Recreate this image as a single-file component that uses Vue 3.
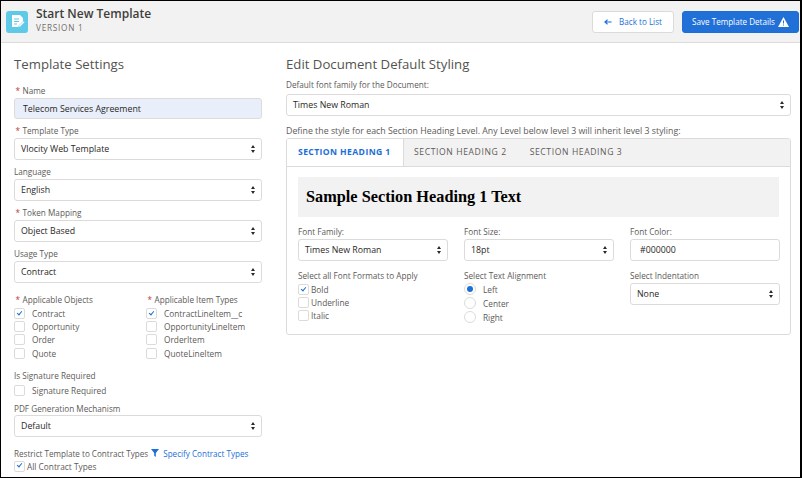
<script setup>
const objects = [
  { label: "Contract", checked: true },
  { label: "Opportunity" },
  { label: "Order" },
  { label: "Quote" },
];
const itemTypes = [
  { label: "ContractLineItem__c", checked: true },
  { label: "OpportunityLineItem" },
  { label: "OrderItem" },
  { label: "QuoteLineItem" },
];
const topSelects = [
  { label: "Template Type", value: "Vlocity Web Template", required: true },
  { label: "Language", value: "English" },
  { label: "Token Mapping", value: "Object Based", required: true },
  { label: "Usage Type", value: "Contract" },
];
const tabs = ["SECTION HEADING 1", "SECTION HEADING 2", "SECTION HEADING 3"];
const formats = [
  { label: "Bold", checked: true },
  { label: "Underline" },
  { label: "Italic" },
];
const aligns = [
  { label: "Left", on: true },
  { label: "Center" },
  { label: "Right" },
];
</script>

<template>
  <div class="page">
    <header class="top">
      <div class="logo">
        <svg width="17" height="17" viewBox="0 0 17 17">
          <path d="M3 2h8l3 3v4l-4 5H3z" fill="#fff" />
          <path d="M5 6h5M5 8.5h5M5 11h3" stroke="#5fc9e8" stroke-width="1.2" />
          <path d="M10 12.5l4.5-4.5 1.2 1.2-4.5 4.5-1.7.5z" fill="#fff" stroke="#5fc9e8" stroke-width=".5" />
        </svg>
      </div>
      <div class="titles">
        <div class="title">Start New Template</div>
        <div class="version">VERSION 1</div>
      </div>
      <button class="btn back">
        <svg width="8" height="8" viewBox="0 0 9 9"><path d="M8.5 4.5H2M4 2L1 4.5 4 7" fill="none" stroke="#1b6fd8" stroke-width="1.2" /></svg>
        Back to List
      </button>
      <button class="btn save">
        Save Template Details
        <svg width="11" height="10" viewBox="0 0 11 10"><path d="M5.5 0L11 10H0z" fill="#fff" /><path d="M5.5 3.5v3M5.5 7.5v1" stroke="#2170d8" stroke-width="1" /></svg>
      </button>
    </header>

    <main class="body">
      <section class="left">
        <h2>Template Settings</h2>
        <div class="field first">
          <label><i>*</i>Name</label>
          <div class="box filled">Telecom Services Agreement</div>
        </div>
        <div v-for="s in topSelects" :key="s.label" class="field">
          <label><i v-if="s.required">*</i>{{ s.label }}</label>
          <div class="box sel">
            {{ s.value }}
            <span class="arrows"></span>
          </div>
        </div>

        <div class="applicable">
          <div class="col">
            <label><i>*</i>Applicable Objects</label>
            <div v-for="o in objects" :key="o.label" class="check wide">
              <span class="cb" :class="{ on: o.checked }"></span>{{ o.label }}
            </div>
          </div>
          <div class="col">
            <label><i>*</i>Applicable Item Types</label>
            <div v-for="o in itemTypes" :key="o.label" class="check wide">
              <span class="cb" :class="{ on: o.checked }"></span>{{ o.label }}
            </div>
          </div>
        </div>

        <div class="sig">
          <label>Is Signature Required</label>
          <div class="check wide"><span class="cb"></span>Signature Required</div>
        </div>
        <div class="pdf">
          <label>PDF Generation Mechanism</label>
          <div class="box sel">Default<span class="arrows"></span></div>
        </div>
        <div class="restrict">
          <span>Restrict Template to Contract Types</span>
          <svg width="8" height="8" viewBox="0 0 10 10"><path d="M0 0h10L6 5v5L4 8.5V5z" fill="#1b6fd8" /></svg>
          <a>Specify Contract Types</a>
        </div>
        <div class="check"><span class="cb on"></span>All Contract Types</div>
      </section>

      <section class="right">
        <h2>Edit Document Default Styling</h2>
        <div class="family">
          <label>Default font family for the Document:</label>
          <div class="box sel">Times New Roman<span class="arrows"></span></div>
        </div>
        <p class="hint">Define the style for each Section Heading Level. Any Level below level 3 will inherit level 3 styling:</p>

        <div class="card">
          <div class="tabs">
            <div v-for="(t, i) in tabs" :key="t" class="tab" :class="{ active: i === 0 }">{{ t }}</div>
          </div>
          <div class="pane">
            <div class="sample">Sample Section Heading 1 Text</div>
            <div class="grid">
              <div>
                <label>Font Family:</label>
                <div class="box sel">Times New Roman<span class="arrows"></span></div>
              </div>
              <div>
                <label>Font Size:</label>
                <div class="box sel">18pt<span class="arrows"></span></div>
              </div>
              <div>
                <label>Font Color:</label>
                <div class="box color">#000000</div>
              </div>
              <div>
                <label>Select all Font Formats to Apply</label>
                <div v-for="f in formats" :key="f.label" class="check">
                  <span class="cb" :class="{ on: f.checked }"></span>{{ f.label }}
                </div>
              </div>
              <div>
                <label>Select Text Alignment</label>
                <div class="radios">
                  <div v-for="a in aligns" :key="a.label" class="radio">
                    <span class="rd" :class="{ on: a.on }"></span>{{ a.label }}
                  </div>
                </div>
              </div>
              <div>
                <label>Select Indentation</label>
                <div class="box sel">None<span class="arrows"></span></div>
              </div>
            </div>
          </div>
        </div>
      </section>
    </main>
  </div>
</template>

<style>
html, body { margin: 0; background: #fff; }
</style>

<style scoped>
.page {
  width: 802px;
  height: 478px;
  box-sizing: border-box;
  border: 1px solid #000;
  border-right-width: 2px;
  overflow: hidden;
  font-family: "Open Sans", "Liberation Sans", sans-serif;
  font-size: 8.8px;
  color: #3e3e3c;
  background: #fff;
}
.top {
  height: 41px;
  background: #f3f2f2;
  border-bottom: 1px solid #dddbda;
  display: flex;
  align-items: center;
  padding: 0 1px 0 5px;
}
.logo {
  width: 22px;
  height: 22px;
  border-radius: 3px;
  background: #5fc9e8;
  display: flex;
  align-items: center;
  justify-content: center;
  margin-right: 8px;
}
.titles { flex: 1; margin-top: -4px; }
.title { font-size: 12px; font-weight: 600; line-height: 16px; color: #3e3e3c; }
.version { font-size: 8.2px; line-height: 11px; letter-spacing: .75px; color: #706e6b; }
.btn {
  height: 22px;
  border-radius: 3px;
  font: inherit;
  font-size: 8.1px;
  display: flex;
  align-items: center;
  justify-content: center;
  gap: 3px;
  padding: 0;
}
.back {
  width: 82px;
  background: #fff;
  color: #1b6fd8;
  border: 1px solid #dddbda;
  margin-right: 8px;
  gap: 7px;
}
.save {
  width: 117px;
  background: #2170d8;
  color: #fff;
  border: 1px solid #1b6fd8;
}
.body { display: flex; }
.left { width: 248px; margin-left: 13px; }
.right { width: 505px; margin-left: 24px; }
h2 {
  margin: 0;
  padding-top: 11px;
  font-size: 13.2px;
  line-height: 20px;
  font-weight: 400;
  color: #54534f;
}
label {
  display: block;
  font-size: 8.2px;
  line-height: 12px;
  color: #5c5a58;
}
label i {
  font-style: normal;
  color: #c23934;
  margin: 0 2.5px 0 1.5px;
}
.field { margin-top: 6px; }
.field label { margin-bottom: 1px; }
.field.first { margin-top: 11px; }
.field.first .box { height: 21px; line-height: 20px; }
.box {
  position: relative;
  height: 22px;
  line-height: 20px;
  box-sizing: border-box;
  background: #fff;
  border: 1px solid #dddbda;
  border-radius: 3px;
  padding: 0 6px;
  color: #2b2826;
  white-space: nowrap;
}
.box.filled { background: #e8effa; padding-left: 8px; }
.box.color { padding-left: 9px; }
.arrows {
  position: absolute;
  right: 6px;
  top: 6px;
  width: 0;
  height: 0;
  border-left: 2.5px solid transparent;
  border-right: 2.5px solid transparent;
  border-bottom: 3.5px solid #2b2826;
}
.arrows::after {
  content: "";
  position: absolute;
  left: -2.5px;
  top: 5px;
  width: 0;
  height: 0;
  border-left: 2.5px solid transparent;
  border-right: 2.5px solid transparent;
  border-top: 3.5px solid #2b2826;
}
.applicable { display: flex; margin-top: 11px; }
.col { flex: none; width: 132px; }
.col label { margin-bottom: 1px; }
.check {
  display: flex;
  align-items: center;
  height: 13.2px;
  font-size: 8.3px;
  color: #5c5a58;
  white-space: nowrap;
}
.cb {
  position: relative;
  flex: none;
  width: 9px;
  height: 9px;
  border: 1px solid #dddbda;
  border-radius: 2px;
  background: #fff;
  margin-right: 2px;
}
.check.wide .cb { margin-right: 7px; }
.cb.on::after {
  content: "";
  position: absolute;
  left: 2px;
  top: 1.5px;
  width: 4px;
  height: 2px;
  border-left: 1.4px solid #1b6fd8;
  border-bottom: 1.4px solid #1b6fd8;
  transform: rotate(-50deg);
}
.sig { margin-top: 10px; }
.sig label { margin-bottom: 2px; }
.sig .check { height: 14px; }
.pdf { margin-top: 5px; }
.restrict {
  display: flex;
  align-items: center;
  gap: 3px;
  margin-top: 10px;
  height: 13px;
  font-size: 8.1px;
  color: #5c5a58;
  white-space: nowrap;
}
.restrict svg { flex: none; margin-right: 1px; }
.restrict a { color: #1b6fd8; }
.family { margin-top: 5px; }
.family label { margin-bottom: 3px; }
.hint { margin: 9px 0 0; font-size: 8.8px; line-height: 12px; color: #5c5a58; white-space: nowrap; }
.card {
  margin-top: 1px;
  border: 1px solid #dddbda;
  border-radius: 3px;
  height: 197px;
  box-sizing: border-box;
  overflow: hidden;
}
.tabs {
  display: flex;
  height: 27px;
  background: #f3f2f2;
  border-bottom: 1px solid #dddbda;
}
.tab {
  font-size: 8.6px;
  line-height: 26px;
  letter-spacing: .6px;
  color: #5c5a58;
  padding: 0 13px 0 9px;
  margin-right: 1px;
}
.tab.active {
  height: 27px;
  width: 117px;
  box-sizing: border-box;
  background: #fff;
  border-right: 1px solid #dddbda;
  color: #1b6fd8;
  font-weight: 700;
  letter-spacing: .4px;
  padding: 0 0 0 11px;
}
.pane { padding: 10px 11px; }
.sample {
  height: 40px;
  line-height: 40px;
  background: #f3f2f2;
  padding-left: 8px;
  font-family: "Liberation Serif", serif;
  font-size: 16.3px;
  font-weight: 700;
  color: #000;
}
.grid {
  display: grid;
  grid-template-columns: 150px 150px 150px;
  column-gap: 16px;
  margin-top: 9px;
}
.grid > div:nth-child(n + 4) { margin-top: 9px; }
.grid label { margin-bottom: 1px; }
.radios { margin-top: -1px; }
.radio {
  display: flex;
  align-items: center;
  height: 14px;
  font-size: 8.3px;
  color: #5c5a58;
}
.rd {
  position: relative;
  flex: none;
  width: 10px;
  height: 10px;
  border: 1px solid #dddbda;
  border-radius: 50%;
  margin-right: 7px;
}
.rd.on::after {
  content: "";
  position: absolute;
  left: 2px;
  top: 2px;
  width: 6px;
  height: 6px;
  border-radius: 50%;
  background: #1b6fd8;
}
</style>
